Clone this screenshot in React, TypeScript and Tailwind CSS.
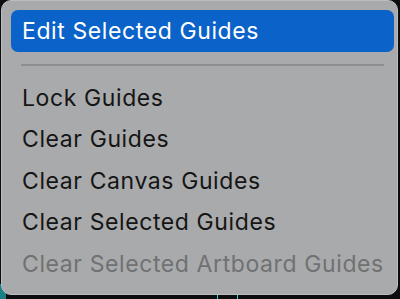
const items = [
  { label: "Lock Guides" },
  { label: "Clear Guides" },
  { label: "Clear Canvas Guides" },
  { label: "Clear Selected Guides" },
  { label: "Clear Selected Artboard Guides", disabled: true },
];

const App = () => {
  return (
    <div className="relative w-[400px] h-[299px] overflow-hidden bg-[#0b0d0e] font-['Inter',Arial,sans-serif]">
      {/* guide lines peeking out under the menu */}
      <div className="absolute left-[217px] top-[288px] w-px h-[11px] bg-[#27d3e0]" />
      <div className="absolute left-[237px] top-[288px] w-px h-[11px] bg-[#27d3e0]" />
      <div className="absolute left-0 top-[284px] w-[6px] h-[15px] bg-[#1b7f86]" />

      <div className="relative ml-px w-[397px] h-[295px] rounded-[10px] border border-[#bcbdbe] bg-[#a9aaab] pl-[9px] pr-[3px] pt-[9px]">
        <div className="flex h-[42px] items-center whitespace-nowrap rounded-[7px] bg-[#0b62c9] px-[11px] text-[23px] tracking-[0.6px] text-white">
          Edit Selected Guides
        </div>
        <div className="flex h-[25px] items-center px-[10px]">
          <div className="h-[2px] w-full bg-[#8d8e8f]" />
        </div>
        {items.map((item, i) => (
          <div
            key={i}
            className={
              item.disabled
                ? "flex h-[41.5px] items-center whitespace-nowrap px-[11px] text-[23px] tracking-[0.6px] text-[#707172]"
                : "flex h-[41.5px] items-center whitespace-nowrap px-[11px] text-[23px] tracking-[0.6px] text-[#151515]"
            }
          >
            {item.label}
          </div>
        ))}
      </div>
    </div>
  );
};

export default App;
